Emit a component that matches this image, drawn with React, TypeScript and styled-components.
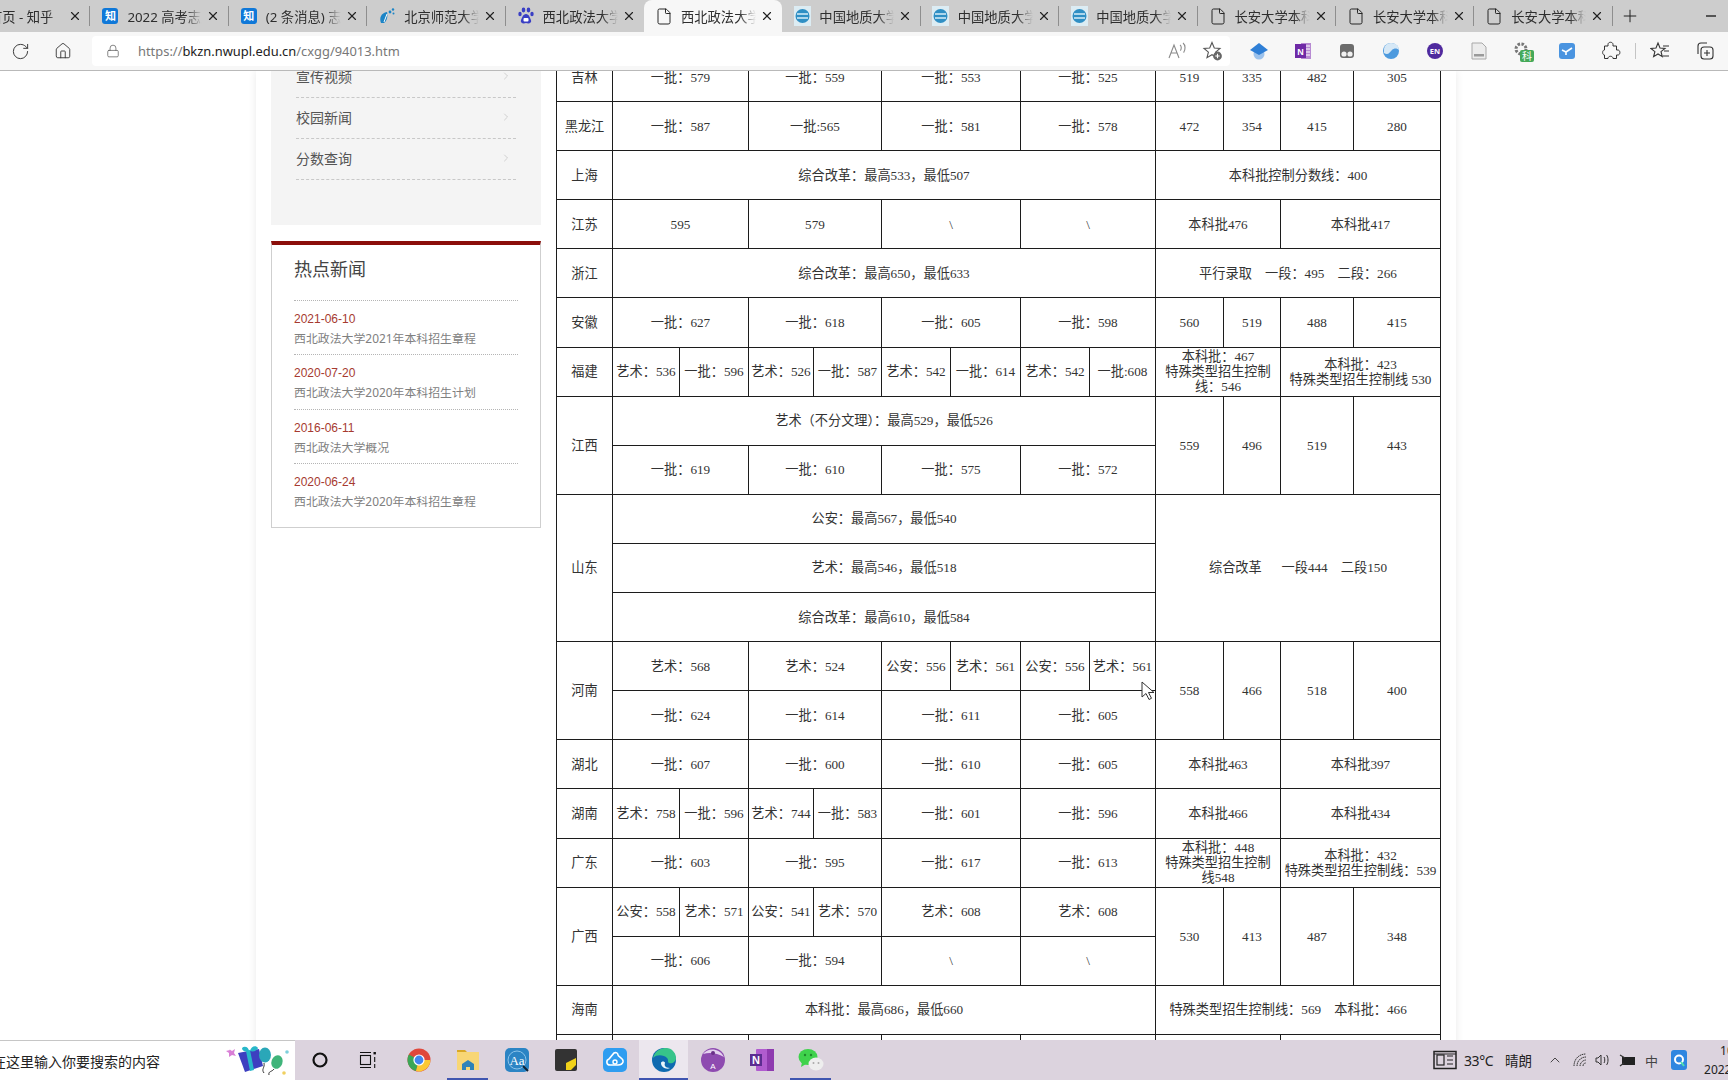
import React from 'react';
import styled, { createGlobalStyle } from 'styled-components';
import { ChevronRight, ChevronUp, File, Home, Lock, Plus, RotateCw, X } from 'lucide-react';

const UI_FONT = '"Noto Sans", "Noto Sans CJK SC", sans-serif';
const TABLE_FONT = '"Liberation Serif", "Noto Sans CJK SC", serif';

const GlobalStyle = createGlobalStyle`
  html, body { margin: 0; height: 100%; overflow: hidden; background: #fff; }
  * { box-sizing: border-box; }
`;

/* favicons */
const ZhihuIcon = () => <ZhihuBadge>知</ZhihuBadge>;

const BnuIcon = () => (
  <svg width="17" height="18" viewBox="0 0 17 18">
    <path d="M2 16c-2-5 0-10 6-11 1 4 0 9-3 11z" fill="#1b84c6" />
    <path d="M5 15c1-3 2-5 3-8" stroke="#fff" strokeWidth="1" fill="none" />
    <circle cx="11" cy="5" r="1.4" fill="#1b84c6" />
    <circle cx="14" cy="2.5" r="1.2" fill="#1b84c6" />
    <circle cx="14.5" cy="6.5" r="1" fill="#1b84c6" />
  </svg>
);

const PawIcon = () => (
  <svg width="16" height="18" viewBox="0 0 16 18">
    <ellipse cx="5.5" cy="3" rx="1.8" ry="2.4" fill="#3a3fc4" />
    <ellipse cx="10.5" cy="3" rx="1.8" ry="2.4" fill="#3a3fc4" />
    <ellipse cx="2" cy="7" rx="1.7" ry="2.2" fill="#3a3fc4" />
    <ellipse cx="14" cy="7" rx="1.7" ry="2.2" fill="#3a3fc4" />
    <path d="M8 7c3 0 4 4 5 6 1 3-2 4-5 3-3 1-6 0-5-3 1-2 2-6 5-6z" fill="#3a3fc4" />
    <rect x="5.5" y="11" width="5" height="3.5" rx="1" fill="#fff" />
  </svg>
);

const GlobeIcon = () => (
  <svg width="17" height="20" viewBox="0 0 17 20">
    <rect width="17" height="20" fill="#dcecf3" />
    <circle cx="8.5" cy="10" r="7" fill="#2f8fc4" />
    <path d="M3 8h11M3 12h11" stroke="#d8eef8" strokeWidth="1.4" />
  </svg>
);

const DocIcon = () => <File size={19} strokeWidth={1.3} color="#222" />;

/* toolbar extensions */
const ReadAloud = () => (
  <svg width="22" height="20" viewBox="0 0 22 20" fill="none" stroke="#8a8a8a" strokeWidth="1.1">
    <path d="M2 17 7 4l5 13M4 12h6" />
    <path d="M13 4c1.6 1 1.6 4 .4 5.6M16 2c2.6 2 2.6 7 .6 9.6" />
  </svg>
);

const FavAdd = () => (
  <svg width="22" height="22" viewBox="0 0 22 22" fill="none">
    <path d="M10 2.5 12.3 8l5.7.4-4.4 3.7 1.4 5.6L10 14.7l-5 3 1.4-5.6L2 8.4 7.7 8z" stroke="#555" strokeWidth="1.1" />
    <circle cx="15.5" cy="16" r="4.4" fill="#666" />
    <path d="M15.5 13.8v4.4M13.3 16h4.4" stroke="#fff" strokeWidth="1.1" />
  </svg>
);

const CapExt = () => (
  <svg width="20" height="22" viewBox="0 0 20 22">
    <circle cx="10" cy="14" r="5.5" fill="#9cc2ec" />
    <path d="M10 3 19 10 10 15 1 10z" fill="#2f7fd6" />
  </svg>
);

const NoteExt = () => (
  <svg width="18" height="20" viewBox="0 0 18 20">
    <rect x="7" y="2" width="10" height="16" fill="#b78ad2" />
    <path d="M11 5h5M11 8h5M11 11h5M11 14h5" stroke="#fff" strokeWidth="1" />
    <rect x="1" y="3" width="11" height="14" fill="#6f2aa6" />
    <text x="6.5" y="13.5" fontSize="9" fontWeight="700" fill="#fff" textAnchor="middle" fontFamily="Liberation Sans">N</text>
  </svg>
);

const GlassesExt = () => (
  <svg width="16" height="16" viewBox="0 0 16 16">
    <rect x="1" y="1" width="14" height="14" rx="3" fill="#6c6c6c" />
    <circle cx="5" cy="11" r="2.6" fill="#f2f2f2" />
    <circle cx="11" cy="11" r="2.6" fill="#f2f2f2" />
  </svg>
);

const SwirlExt = () => (
  <svg width="18" height="18" viewBox="0 0 18 18">
    <circle cx="9" cy="9" r="8" fill="#4d9ade" />
    <path d="M2 11c4 3 6-1 8-3s5-2 7 0c0-4-3-7-8-7-4 0-7 3-7 7z" fill="#d6e8f6" />
  </svg>
);

const EnExt = () => <EnBadge>EN</EnBadge>;

const PageExt = () => (
  <svg width="16" height="18" viewBox="0 0 16 18">
    <path d="M1 1h10l4 4v12H1z" fill="#ececec" stroke="#a8a8a8" />
    <rect x="3" y="12" width="10" height="2.5" fill="#9a9a9a" />
  </svg>
);

const GearExt = () => (
  <svg width="22" height="22" viewBox="0 0 22 22">
    <circle cx="9" cy="9" r="5" fill="none" stroke="#777" strokeWidth="3" strokeDasharray="2.5 1.4" />
    <rect x="8" y="10" width="14" height="12" rx="2" fill="#45a958" />
    <text x="15" y="20" fontSize="10" fill="#fff" textAnchor="middle" fontFamily="Noto Sans CJK SC">科</text>
  </svg>
);

const TaskExt = () => (
  <svg width="18" height="18" viewBox="0 0 18 18">
    <rect x="1" y="1" width="16" height="16" rx="3" fill="#4a94e0" />
    <path d="M4 8l4 2 6-4M8 10v3" stroke="#fff" strokeWidth="1.6" fill="none" />
  </svg>
);

const PuzzleIcon = () => (
  <svg width="20" height="20" viewBox="0 0 20 20" fill="none" stroke="#333" strokeWidth="1">
    <path d="M7 3.5c0-3 5-3 5 0V5h3.5v4H17c2.5 0 2.5 5 0 5h-1.5v3.5H12c0-3-5-3-5 0H3.5V14C1 14 1 9 3.5 9V5H7z" />
  </svg>
);

const FavList = () => (
  <svg width="20" height="20" viewBox="0 0 20 20" fill="none" stroke="#333" strokeWidth="1.1">
    <path d="M8 2l2 5 5 .4-4 3.2 1.3 5L8 13l-4.4 2.6 1.3-5-4-3.2L6 7z" />
    <path d="M13 5h6M14 10h5M13 15h6" />
  </svg>
);

const Collections = () => (
  <svg width="20" height="20" viewBox="0 0 20 20" fill="none" stroke="#333" strokeWidth="1.1">
    <path d="M4 13V5c0-2 1-3 3-3h6" />
    <rect x="7" y="6" width="12" height="12" rx="3" />
    <path d="M13 9v6M10 12h6" />
  </svg>
);

/* taskbar */
const GiftArt = () => (
  <svg width="68" height="38" viewBox="0 0 68 38">
    <path d="M7 7l3 2 3-2-1 4 2 3-4-1-3 2 0-4-3-2 4-1z" fill="#d97fd6" />
    <path d="M16 11 37 7l4 17-18 6z" fill="#3d3fc0" />
    <path d="M24 9l4 20 4-1-4-20z" fill="#27b7c9" />
    <path d="M20 6c3-3 7 0 7 3-4 1-7 0-7-3zM28 9c1-5 6-6 8-3-1 3-5 4-8 3z" fill="#27b7c9" />
    <ellipse cx="43" cy="13" rx="6" ry="7.5" fill="#2aa7b8" />
    <ellipse cx="55" cy="20" rx="5.5" ry="7" transform="rotate(20 55 20)" fill="#3fb47a" />
    <path d="M42 21c1 5-3 6 0 10M52 27c-2 3-6 2-5 6" stroke="#333" strokeWidth="1" fill="none" />
    <circle cx="65" cy="10" r="1.8" fill="#7ed0dc" />
    <circle cx="62" cy="31" r="1.8" fill="#f0d060" />
  </svg>
);

const RingIcon = () => (
  <svg width="18" height="18" viewBox="0 0 18 18">
    <circle cx="9" cy="9" r="6.5" fill="none" stroke="#111" strokeWidth="2.2" />
  </svg>
);

const TaskViewIcon = () => (
  <svg width="18" height="18" viewBox="0 0 18 18" fill="none" stroke="#111" strokeWidth="1.1">
    <path d="M1 1.5h11M1 16.5h11" />
    <rect x="1.5" y="4.5" width="10" height="9" />
    <rect x="14.5" y="1" width="2.4" height="2.4" fill="#111" stroke="none" />
    <path d="M15.7 6v5M15.7 13v4" />
  </svg>
);

const ChromeIcon = () => (
  <svg width="24" height="24" viewBox="0 0 24 24">
    <circle cx="12" cy="12" r="11.5" fill="#e0483c" />
    <path d="M12 12 1.9 6.5A11.5 11.5 0 0 0 9 23.1z" fill="#3aa757" />
    <path d="M12 12h11.4A11.5 11.5 0 0 1 9 23.1z" fill="#fbc934" />
    <circle cx="12" cy="12" r="5.6" fill="#fff" />
    <circle cx="12" cy="12" r="4.4" fill="#4286f0" />
  </svg>
);

const FolderIcon = () => (
  <svg width="24" height="22" viewBox="0 0 24 22">
    <path d="M1 1h8l2 2H1z" fill="#d9a826" />
    <rect x="1" y="3" width="22" height="18" fill="#f8d675" />
    <path d="M6 21v-6l6-4 6 4v6h-4v-3h-4v3z" fill="#2f83b8" />
  </svg>
);

const DictIcon = () => (
  <svg width="24" height="24" viewBox="0 0 24 24">
    <rect width="24" height="24" rx="5" fill="#2b84c4" />
    <circle cx="12" cy="12" r="9" fill="none" stroke="#8cc4ea" strokeWidth="1" />
    <text x="12" y="17" fontSize="13" fill="#fff" textAnchor="middle" fontFamily="Liberation Serif">Aa</text>
    <path d="M18 18l5 5" stroke="#123" strokeWidth="2" />
  </svg>
);

const StickyIcon = () => (
  <svg width="22" height="22" viewBox="0 0 22 22">
    <rect width="22" height="22" rx="2" fill="#333" />
    <path d="M11 21V14l10-5v7l-5 5z" fill="#f2d21a" />
  </svg>
);

const CloudIcon = () => (
  <svg width="24" height="24" viewBox="0 0 24 24">
    <rect width="24" height="24" rx="5" fill="#2f9df0" />
    <path d="M7 17c-4 0-4-5-1-6l5-6c2-1 4 0 4 2 0 2 6 3 5 7-1 3-3 3-5 3z" fill="none" stroke="#fff" strokeWidth="1.6" />
    <circle cx="12" cy="14" r="2" fill="none" stroke="#fff" strokeWidth="1.4" />
  </svg>
);

const EdgeIcon = () => (
  <svg width="24" height="24" viewBox="0 0 24 24">
    <circle cx="12" cy="12" r="12" fill="#0f6bb0" />
    <path d="M1 10C3 2 10 0 14 0c6 0 10 5 10 10 0 4-4 6-7 5-2-1 0-3-2-5-3-3-10-4-14 0z" fill="#37c48a" />
    <path d="M9 15c0 4 5 7 9 5-5 0-6-3-5-5 0-2-4-2-4 0z" fill="#e9f6fb" />
  </svg>
);

const PurpleIcon = () => (
  <svg width="24" height="24" viewBox="0 0 24 24">
    <circle cx="12" cy="12" r="12" fill="#8e4bb0" />
    <path d="M2 6C6 0 18-1 23 9 16 5 9 4 2 6z" fill="#e4d2ee" />
    <circle cx="12" cy="5" r="2" fill="#6a3088" />
    <text x="12" y="21" fontSize="8" fill="#fff" textAnchor="middle" fontFamily="Liberation Sans">A</text>
  </svg>
);

const OneNoteIcon = () => (
  <svg width="24" height="22" viewBox="0 0 24 22">
    <rect x="6" y="0" width="18" height="22" rx="1" fill="#b05ccf" />
    <rect x="17" y="0" width="7" height="22" fill="#8f3bb0" />
    <rect x="0" y="5" width="12" height="12" fill="#5c2d91" />
    <text x="6" y="15" fontSize="11" fontWeight="700" fill="#fff" textAnchor="middle" fontFamily="Liberation Sans">N</text>
  </svg>
);

const WechatIcon = () => (
  <svg width="26" height="24" viewBox="0 0 26 24">
    <ellipse cx="10" cy="9" rx="9.5" ry="8" fill="#3fd24c" />
    <path d="M4 14l-1 5 5-3z" fill="#3fd24c" />
    <circle cx="7" cy="7" r="1.2" fill="#1f8a2a" />
    <circle cx="13" cy="7" r="1.2" fill="#1f8a2a" />
    <ellipse cx="18" cy="16" rx="7.5" ry="6.5" fill="#eeeeee" />
    <circle cx="15.5" cy="15" r="1" fill="#aaa" />
    <circle cx="20.5" cy="15" r="1" fill="#aaa" />
  </svg>
);

const NewsIcon = () => (
  <svg width="24" height="20" viewBox="0 0 24 20" fill="none" stroke="#222" strokeWidth="1.5">
    <rect x="1" y="1.5" width="22" height="17" />
    <rect x="4" y="5" width="7" height="10" strokeWidth="1.2" />
    <path d="M14 6h6M14 10h6M14 14h6M1 4h22" strokeWidth="1.2" />
  </svg>
);

const WifiIcon = () => (
  <svg width="14" height="14" viewBox="0 0 14 14" fill="none" stroke="#333" strokeWidth="1">
    <path d="M1 13C1 6 6 1 13 1M4 13c0-5 4-9 9-9M7 13c0-3 3-6 6-6M10 13c0-2 1-3 3-3" strokeDasharray="1.5 .6" />
  </svg>
);

const SpeakerIcon = () => (
  <svg width="15" height="14" viewBox="0 0 15 14" fill="none" stroke="#333" strokeWidth="1">
    <path d="M1 5v4h2l3 3V2L3 5zM9 4c1 1 1 5 0 6M11.5 2c2 2 2 8 0 10" />
  </svg>
);

const BatteryIcon = () => (
  <svg width="16" height="13" viewBox="0 0 16 13">
    <rect x="3" y="3" width="13" height="8" fill="#222" />
    <path d="M1 1l5 3M1 12l4-3" stroke="#333" strokeWidth="1.2" />
  </svg>
);

const QIcon = () => (
  <svg width="16" height="20" viewBox="0 0 16 20">
    <rect width="16" height="20" rx="3" fill="#2f86e0" />
    <circle cx="8" cy="9.5" r="4" fill="none" stroke="#fff" strokeWidth="2" />
    <path d="M10 12l3 4" stroke="#4fe0b0" strokeWidth="2" />
  </svg>
);

const Cursor = () => (
  <CursorArt width="15" height="20" viewBox="0 0 15 20">
    <path d="M1 1v15l4-3.5 3 6 2.5-1.2-3-5.8h5.5z" fill="#fff" stroke="#333" strokeWidth="1" />
  </CursorArt>
);

type TabData = { title: string; icon: React.ReactNode; active?: boolean };

const tabs: TabData[] = [
  { title: '首页 - 知乎', icon: <ZhihuIcon /> },
  { title: '2022 高考志愿', icon: <ZhihuIcon /> },
  { title: '(2 条消息) 志愿', icon: <ZhihuIcon /> },
  { title: '北京师范大学本', icon: <BnuIcon /> },
  { title: '西北政法大学本', icon: <PawIcon /> },
  { title: '西北政法大学本', icon: <DocIcon />, active: true },
  { title: '中国地质大学本', icon: <GlobeIcon /> },
  { title: '中国地质大学本', icon: <GlobeIcon /> },
  { title: '中国地质大学本', icon: <GlobeIcon /> },
  { title: '长安大学本科招', icon: <DocIcon /> },
  { title: '长安大学本科招', icon: <DocIcon /> },
  { title: '长安大学本科招', icon: <DocIcon /> },
];

const menu = ['宣传视频', '校园新闻', '分数查询'];

const news = [
  { date: '2021-06-10', title: '西北政法大学2021年本科招生章程' },
  { date: '2020-07-20', title: '西北政法大学2020年本科招生计划' },
  { date: '2016-06-11', title: '西北政法大学概况' },
  { date: '2020-06-24', title: '西北政法大学2020年本科招生章程' },
];

const colWidths = [56, 67, 69, 65, 68, 69, 70, 69, 66, 68, 57, 73, 87];

const nb = (n: number) => '\u00a0'.repeat(n);

// [text, colSpan, rowSpan]; a plain string is one column
type Cell = string | [string, number, number?];
const g = (t: string): Cell => [t, 2];

const rows: Cell[][] = [
  ['吉林', g('一批：579'), g('一批：559'), g('一批：553'), g('一批：525'), '519', '335', '482', '305'],
  ['黑龙江', g('一批：587'), g('一批:565'), g('一批：581'), g('一批：578'), '472', '354', '415', '280'],
  ['上海', ['综合改革：最高533，最低507', 8], ['本科批控制分数线：400', 4]],
  ['江苏', g('595'), g('579'), g('\\'), g('\\'), g('本科批476'), g('本科批417')],
  ['浙江', ['综合改革：最高650，最低633', 8], [`平行录取${nb(4)}一段：495${nb(4)}二段：266`, 4]],
  ['安徽', g('一批：627'), g('一批：618'), g('一批：605'), g('一批：598'), '560', '519', '488', '415'],
  ['福建', '艺术：536', '一批：596', '艺术：526', '一批：587', '艺术：542', '一批：614', '艺术：542', '一批:608',
    g('本科批：467\n特殊类型招生控制\n线：546'), g('本科批：423\n特殊类型招生控制线 530')],
  [['江西', 1, 2], ['艺术（不分文理）：最高529，最低526', 8], ['559', 1, 2], ['496', 1, 2], ['519', 1, 2], ['443', 1, 2]],
  [g('一批：619'), g('一批：610'), g('一批：575'), g('一批：572')],
  [['山东', 1, 3], ['公安：最高567，最低540', 8], [`综合改革${nb(6)}一段444${nb(4)}二段150`, 4, 3]],
  [['艺术：最高546，最低518', 8]],
  [['综合改革：最高610，最低584', 8]],
  [['河南', 1, 2], g('艺术：568'), g('艺术：524'), '公安：556', '艺术：561', '公安：556', '艺术：561', ['558', 1, 2], ['466', 1, 2], ['518', 1, 2], ['400', 1, 2]],
  [g('一批：624'), g('一批：614'), g('一批：611'), g('一批：605')],
  ['湖北', g('一批：607'), g('一批：600'), g('一批：610'), g('一批：605'), g('本科批463'), g('本科批397')],
  ['湖南', '艺术：758', '一批：596', '艺术：744', '一批：583', g('一批：601'), g('一批：596'), g('本科批466'), g('本科批434')],
  ['广东', g('一批：603'), g('一批：595'), g('一批：617'), g('一批：613'), g('本科批：448\n特殊类型招生控制\n线548'), g('本科批：432\n特殊类型招生控制线：539')],
  [['广西', 1, 2], '公安：558', '艺术：571', '公安：541', '艺术：570', g('艺术：608'), g('艺术：608'), ['530', 1, 2], ['413', 1, 2], ['487', 1, 2], ['348', 1, 2]],
  [g('一批：606'), g('一批：594'), g('\\'), g('\\')],
  ['海南', ['本科批：最高686，最低660', 8], [`特殊类型招生控制线：569${nb(4)}本科批：466${nb(6)}`, 4]],
  ['', g(''), g(''), g(''), g(''), g(''), g('')],
];

const extensions = [
  <CapExt />, <NoteExt />, <GlassesExt />, <SwirlExt />, <EnExt />, <PageExt />, <GearExt />, <TaskExt />, <PuzzleIcon />,
];

const apps: { icon: React.ReactNode; open?: boolean; current?: boolean }[] = [
  { icon: <ChromeIcon /> },
  { icon: <FolderIcon />, open: true },
  { icon: <DictIcon /> },
  { icon: <StickyIcon /> },
  { icon: <CloudIcon /> },
  { icon: <EdgeIcon />, open: true, current: true },
  { icon: <PurpleIcon /> },
  { icon: <OneNoteIcon /> },
  { icon: <WechatIcon />, open: true },
];

export default function App() {
  return (
    <Screen>
      <GlobalStyle />
      <TabStrip>
        {tabs.map((tab, i) => (
          <Tab key={i} $active={tab.active} $noSep={tabs[i + 1]?.active}>
            <TabIcon>{tab.icon}</TabIcon>
            <TabTitle>{tab.title}</TabTitle>
            <TabClose><X size={14} strokeWidth={2} /></TabClose>
          </Tab>
        ))}
        <NewTab><Plus size={20} strokeWidth={1.2} /></NewTab>
        <Minimize />
      </TabStrip>

      <Toolbar>
        <NavButton><RotateCw size={19} strokeWidth={1.2} /></NavButton>
        <NavButton><Home size={18} strokeWidth={1.2} /></NavButton>
        <AddressBar>
          <Lock size={14} strokeWidth={1.2} color="#555" />
          <Url>https://<UrlHost>bkzn.nwupl.edu.cn</UrlHost>/cxgg/94013.htm</Url>
          <AddressTools>
            <ReadAloud />
            <FavAdd />
          </AddressTools>
        </AddressBar>
        {extensions.map((ext, i) => <ExtSlot key={i}>{ext}</ExtSlot>)}
        <ToolSep />
        <ExtSlot><FavList /></ExtSlot>
        <ExtSlot><Collections /></ExtSlot>
      </Toolbar>

      <Viewport>
        <Page>
          <Sidebar>
            <MenuPanel>
              {menu.map((m) => (
                <MenuItem key={m}>{m}<ChevronRight size={12} strokeWidth={1} color="#aaa" /></MenuItem>
              ))}
            </MenuPanel>
            <NewsBox>
              <NewsHeading>热点新闻</NewsHeading>
              {news.map((n) => (
                <NewsItem key={n.date}>
                  <NewsDate>{n.date}</NewsDate>
                  <NewsTitle>{n.title}</NewsTitle>
                </NewsItem>
              ))}
            </NewsBox>
          </Sidebar>
          <ScoreTable>
            <colgroup>
              {colWidths.map((w, i) => <col key={i} width={w} />)}
            </colgroup>
            <tbody>
              {rows.map((row, i) => (
                <tr key={i}>
                  {row.map((cell, j) => {
                    const [text, colSpan, rowSpan] = typeof cell === 'string' ? [cell, 1, 1] : cell;
                    return <td key={j} colSpan={colSpan} rowSpan={rowSpan ?? 1}>{text}</td>;
                  })}
                </tr>
              ))}
            </tbody>
          </ScoreTable>
        </Page>
        <Cursor />
      </Viewport>

      <Taskbar>
        <SearchBox>
          <SearchText>在这里输入你要搜索的内容</SearchText>
          <GiftArt />
        </SearchBox>
        <CortanaSlot><RingIcon /></CortanaSlot>
        <TaskViewSlot><TaskViewIcon /></TaskViewSlot>
        {apps.map((app, i) => (
          <AppSlot key={i} $open={app.open} $current={app.current}>{app.icon}</AppSlot>
        ))}
        <Tray>
          <TrayItem $gap={0}><NewsIcon /></TrayItem>
          <TrayItem $gap={7}><Temperature>33°C</Temperature></TrayItem>
          <TrayItem $gap={9}><Condition>晴朗</Condition></TrayItem>
          <TrayItem $gap={15}><ChevronUp size={16} strokeWidth={1.2} /></TrayItem>
          <TrayItem $gap={10}><WifiIcon /></TrayItem>
          <TrayItem $gap={8}><SpeakerIcon /></TrayItem>
          <TrayItem $gap={9}><BatteryIcon /></TrayItem>
          <TrayItem $gap={10}><ImeLabel>中</ImeLabel></TrayItem>
          <TrayItem $gap={13}><QIcon /></TrayItem>
          <Clock>
            <ClockTime>10:26</ClockTime>
            <ClockDate>2022/7/4</ClockDate>
          </Clock>
        </Tray>
      </Taskbar>
    </Screen>
  );
}

const Screen = styled.div`
  width: 1728px;
  height: 1080px;
  display: flex;
  flex-direction: column;
  overflow: hidden;
  font-family: ${UI_FONT};
`;

const TabStrip = styled.div`
  height: 32px;
  flex: none;
  display: flex;
  align-items: stretch;
  background: #cdcdcd;
  margin-left: -48px;
`;

const Tab = styled.div<{ $active?: boolean; $noSep?: boolean }>`
  position: relative;
  width: 138.4px;
  flex: none;
  display: flex;
  align-items: center;
  padding-left: 11px;
  border-radius: 8px 8px 0 0;
  background: ${(p) => (p.$active ? '#f7f7f7' : 'transparent')};

  &::after {
    content: '';
    display: ${(p) => (p.$active || p.$noSep ? 'none' : 'block')};
    position: absolute;
    right: 0;
    top: 6px;
    bottom: 6px;
    width: 1px;
    background: #8e8e8e;
  }
`;

const TabIcon = styled.span`
  width: 18px;
  height: 20px;
  flex: none;
  display: flex;
  align-items: center;
  justify-content: center;
`;

const ZhihuBadge = styled.span`
  width: 16px;
  height: 16px;
  border-radius: 3px;
  background: #0f78d8;
  color: #fff;
  font-size: 11px;
  line-height: 16px;
  font-weight: 700;
  text-align: center;
`;

const TabTitle = styled.span`
  width: 75px;
  margin-left: 8px;
  flex: none;
  overflow: hidden;
  white-space: nowrap;
  font-size: 13.3px;
  color: #2e2e2e;
  -webkit-mask-image: linear-gradient(to right, #000 78%, transparent 100%);
  mask-image: linear-gradient(to right, #000 78%, transparent 100%);
`;

const TabClose = styled.span`
  width: 20px;
  margin-left: 1px;
  flex: none;
  display: flex;
  justify-content: center;
  color: #222;
`;

const NewTab = styled.div`
  width: 40px;
  flex: none;
  display: flex;
  align-items: center;
  justify-content: center;
  margin-left: -3px;
  color: #222;
`;

const Minimize = styled.div`
  width: 10px;
  height: 2px;
  flex: none;
  background: #555;
  align-self: center;
  margin-left: 56px;
`;

const Toolbar = styled.div`
  height: 39px;
  flex: none;
  display: flex;
  align-items: center;
  padding-right: 2px;
  background: #f7f7f7;
  border-bottom: 1px solid #b9b9b9;
`;

const NavButton = styled.div`
  width: 40px;
  margin-right: 3px;
  display: flex;
  justify-content: center;
  color: #333;
`;

const AddressBar = styled.div`
  flex: 1;
  height: 30px;
  margin: 0 7px 0 6px;
  padding: 0 6px 0 14px;
  display: flex;
  align-items: center;
  background: #fff;
  border-radius: 4px;
`;

const Url = styled.span`
  margin-left: 18px;
  font-size: 12.9px;
  color: #777;
`;

const UrlHost = styled.span`
  color: #222;
`;

const AddressTools = styled.div`
  margin-left: auto;
  display: flex;
  align-items: center;
  gap: 13px;
`;

const ExtSlot = styled.div`
  width: 44px;
  flex: none;
  display: flex;
  align-items: center;
  justify-content: center;
`;

const EnBadge = styled.span`
  width: 16px;
  height: 16px;
  border-radius: 50%;
  background: #4f2a9e;
  color: #fff;
  font-size: 7.5px;
  font-weight: 700;
  line-height: 16px;
  text-align: center;
`;

const ToolSep = styled.div`
  width: 1px;
  height: 16px;
  margin: 0 2px;
  background: #c4c4c4;
`;

const Viewport = styled.div`
  position: relative;
  flex: 1;
  overflow: hidden;
  background: #fff;
  padding-right: 16px;
`;

const CursorArt = styled.svg`
  position: absolute;
  left: 1141px;
  top: 610px;
`;

const Page = styled.div`
  width: 1200px;
  margin: 0 auto;
  padding-left: 15px;
  display: flex;
  align-items: flex-start;
  gap: 15px;
  background: #fff;
  box-shadow: 0 0 8px rgba(0, 0, 0, 0.09);
`;

const Sidebar = styled.div`
  width: 270px;
  flex: none;
  margin-top: -14px;
`;

const MenuPanel = styled.div`
  padding: 0 25px 45px;
  background: #f4f4f4;
`;

const MenuItem = styled.div`
  height: 41px;
  padding: 0 4px 2px 0;
  display: flex;
  align-items: center;
  justify-content: space-between;
  border-bottom: 1px dashed #c8c8c8;
  font-size: 14px;
  color: #555;
`;

const NewsBox = styled.div`
  margin-top: 16px;
  padding: 0 22px 9px;
  border: 1px solid #cfcfcf;
  border-top: 4px solid #8b0e0a;
`;

const NewsHeading = styled.div`
  height: 55px;
  padding-top: 11px;
  font-size: 18px;
  line-height: 26px;
  color: #444;
`;

const NewsItem = styled.div`
  height: 54.4px;
  padding-top: 10px;
  border-top: 1px dotted #b5b5b5;
`;

const NewsDate = styled.div`
  font-family: "Liberation Sans", sans-serif;
  font-size: 12px;
  line-height: 16px;
  color: #a63a30;
`;

const NewsTitle = styled.div`
  margin-top: 2px;
  font-size: 11.9px;
  line-height: 18px;
  color: #808080;
`;

const ScoreTable = styled.table`
  width: 885px;
  flex: none;
  margin-top: -19px;
  table-layout: fixed;
  border-collapse: collapse;
  font-family: ${TABLE_FONT};
  font-size: 13.2px;
  color: #333;

  tr { height: 49.1px; }

  td {
    padding: 0 2px;
    border: 1px solid #1c1c1c;
    text-align: center;
    line-height: 15px;
    white-space: pre-wrap;
  }
`;

const Taskbar = styled.div`
  height: 40px;
  flex: none;
  display: flex;
  align-items: center;
  background: #dcd3de;
  overflow: hidden;
`;

const SearchBox = styled.div`
  width: 295px;
  height: 40px;
  flex: none;
  display: flex;
  align-items: center;
  justify-content: space-between;
  padding-right: 5px;
  background: #fff;
  border-top: 1px solid #c6c6c6;
  overflow: hidden;
`;

const SearchText = styled.span`
  margin-left: -8px;
  font-size: 14px;
  white-space: nowrap;
  color: #222;
`;

const CortanaSlot = styled.div`
  width: 50px;
  display: flex;
  justify-content: center;
`;

const TaskViewSlot = styled.div`
  width: 46px;
  margin-right: 3px;
  display: flex;
  justify-content: center;
`;

const AppSlot = styled.div<{ $open?: boolean; $current?: boolean }>`
  position: relative;
  width: 49px;
  height: 40px;
  flex: none;
  display: flex;
  align-items: center;
  justify-content: center;
  background: ${(p) => (p.$current ? '#ece7ee' : 'transparent')};

  &::after {
    content: '';
    display: ${(p) => (p.$open ? 'block' : 'none')};
    position: absolute;
    bottom: 0;
    left: ${(p) => (p.$current ? '0' : '4px')};
    right: ${(p) => (p.$current ? '0' : '4px')};
    height: 2px;
    background: #3f55b0;
  }
`;

const Tray = styled.div`
  margin-left: auto;
  width: 295px;
  flex: none;
  display: flex;
  align-items: center;
  overflow: hidden;
  color: #222;
`;

const TrayItem = styled.div<{ $gap: number }>`
  flex: none;
  display: flex;
  align-items: center;
  margin-left: ${(p) => p.$gap}px;
`;

const Temperature = styled.span`
  width: 32px;
  font-size: 14px;
  letter-spacing: -0.4px;
  white-space: nowrap;
`;

const Condition = styled.span`
  font-size: 13.5px;
  white-space: nowrap;
`;

const ImeLabel = styled.span`
  font-size: 13px;
  color: #444;
`;

const Clock = styled.div`
  flex: none;
  margin-left: 17px;
  display: flex;
  flex-direction: column;
  font-size: 12px;
  line-height: 19px;
  white-space: nowrap;
`;

const ClockTime = styled.span`
  padding-left: 16px;
`;

const ClockDate = styled.span``;
